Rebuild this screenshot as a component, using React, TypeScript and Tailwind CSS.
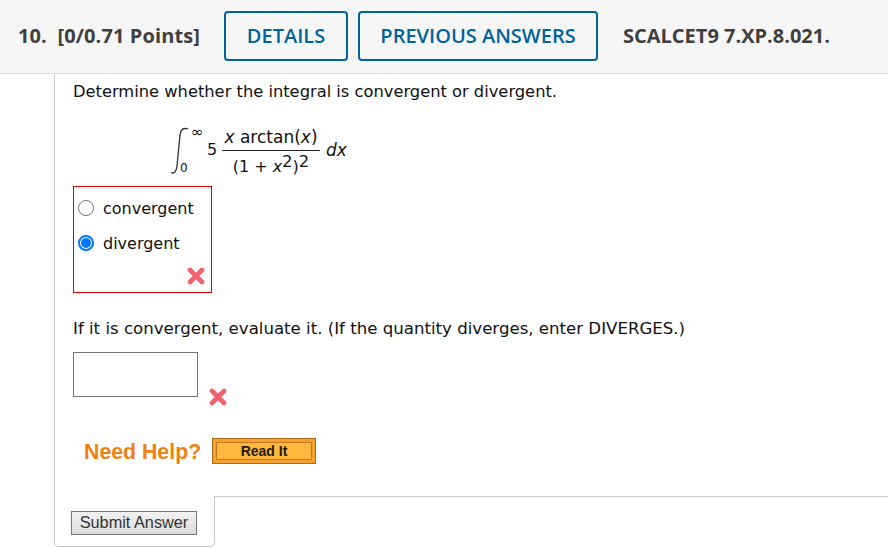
const bodyFont = "font-['DejaVu_Sans',Verdana,sans-serif]";

function CrossMark({ className }: { className: string }) {
  return (
    <svg viewBox="0 0 18 18" className={className}>
      <path d="M3 3 L15 15 M15 3 L3 15" stroke="#f4606c" strokeWidth="4.6" strokeLinecap="round" fill="none" />
    </svg>
  );
}

function Radio({ checked }: { checked?: boolean }) {
  return checked ? (
    <span className="flex h-[16px] w-[16px] items-center justify-center rounded-full border-2 border-[#0075ff] bg-white">
      <span className="h-[10px] w-[10px] rounded-full bg-[#0075ff]" />
    </span>
  ) : (
    <span className="h-[16px] w-[16px] rounded-full border-[1.5px] border-[#767676] bg-white" />
  );
}

function Integral() {
  return (
    <div className="ml-[94px] mt-[19px] flex h-[60px] items-start text-[17px] text-[#111]">
      <div className="relative h-[60px] w-[55px]">
        <svg viewBox="0 0 20 47" className="absolute left-[3px] top-[4px] h-[47px] w-[20px]">
          <path d="M1 45.5 C4 47 6.4 45 7 39 L10 8 C10.6 2.5 13 0.5 18 2" stroke="#333" strokeWidth="1.3" fill="none" />
        </svg>
        <span className="absolute left-[24px] top-[1px] text-[15px] leading-[16px]">∞</span>
        <span className="absolute left-[13px] top-[38px] text-[12px] leading-[14px]">0</span>
        <span className="absolute left-[40px] top-[17px] text-[16px] leading-[20px]">5</span>
      </div>
      <div className="flex w-[98px] flex-col items-center">
        <div className="h-[27px] whitespace-nowrap leading-[28px]">
          <i>x</i> arctan(<i>x</i>)
        </div>
        <div className="h-px w-full bg-[#222]" />
        <div className="whitespace-nowrap text-[16px] leading-[32px]">
          (1 + <i>x</i>
          <sup className="top-[-0.32em] text-[16.5px] leading-none">2</sup>)<sup className="top-[-0.32em] text-[16.5px] leading-none">2</sup>
        </div>
      </div>
      <div className="ml-[6px] mt-[17px] text-[17px] italic leading-[20px]">dx</div>
    </div>
  );
}

export default function App() {
  return (
    <div className={`h-[548px] w-[888px] overflow-hidden bg-white ${bodyFont}`}>
      <header className="flex h-[74px] items-center border-b border-[#dcdcdc] bg-[#f6f6f6] pb-[1px] pl-[18px] font-['Open_Sans',sans-serif] text-[20px] font-bold text-[#3f3f3f]">
        <span className="w-[206px] whitespace-pre tracking-[0.1px]">10.  [0/0.71 Points]</span>
        <button className="h-[50px] w-[124px] rounded-[4px] border-2 border-[#00639c] text-center font-semibold text-[#00639c]">
          DETAILS
        </button>
        <button className="ml-[10px] h-[50px] w-[240px] rounded-[4px] border-2 border-[#00639c] text-center font-semibold text-[#00639c]">
          PREVIOUS ANSWERS
        </button>
        <span className="ml-[25px]">SCALCET9 7.XP.8.021.</span>
      </header>

      <div className="pl-[54px]">
        <main className="h-[422px] border-l border-[#c8c8c8] pl-[18px] pt-[6px] text-[16px] text-[#111]">
          <p className="whitespace-nowrap text-[16.3px] leading-[24px]">Determine whether the integral is convergent or divergent.</p>
          <Integral />

          <div className="mt-[3px] h-[107px] w-[139px] border border-[#dd0000] pl-[4px] pt-[3px]">
            <label className="flex h-[35px] items-center gap-[9px]">
              <Radio />
              <span className="pt-[2px]">convergent</span>
            </label>
            <label className="flex h-[35px] items-center gap-[9px]">
              <Radio checked />
              <span className="pt-[2px]">divergent</span>
            </label>
            <div className="flex justify-end pr-[6px] pt-[7px]">
              <CrossMark className="h-[18px] w-[18px]" />
            </div>
          </div>

          <p className="mt-[24px] whitespace-nowrap text-[16.6px] leading-[24px]">If it is convergent, evaluate it. (If the quantity diverges, enter DIVERGES.)</p>

          <div className="mt-[11px] flex items-end">
            <div className="h-[45px] w-[125px] border border-[#767676] bg-white" />
            <CrossMark className="mb-[-9px] ml-[11px] h-[18px] w-[18px]" />
          </div>

          <div className="ml-[11px] mt-[41px] flex h-[26px] items-start font-['Liberation_Sans',Arial,sans-serif]">
            <span className="h-[26px] w-[128px] text-[21.3px] font-bold leading-[28px] text-[#f08010]">Need Help?</span>
            <div className="flex h-[26px] w-[104px] items-center justify-center border border-[#b06a14] bg-[#f5a030] p-[3px]">
              <div className="flex h-full w-full items-center justify-center border border-[#c07a20] bg-[#ffb73d] text-[14px] font-bold text-[#1c1c1c]">
                Read It
              </div>
            </div>
          </div>
        </main>

        <div className="flex h-[51px]">
          <div className="h-[51px] w-[161px] rounded-b-[5px] border-x border-b border-[#c8c8c8] pl-[16px] pt-[15px]">
            <button className="h-[24px] w-[126px] border border-[#767676] bg-gradient-to-b from-[#f2f2f2] to-[#dcdcdc] pb-[2px] font-['Liberation_Sans',Arial,sans-serif] text-[16.3px] leading-[20px] text-[#333]">
              Submit Answer
            </button>
          </div>
          <div className="flex-1 border-t border-[#c8c8c8]" />
        </div>
      </div>
    </div>
  );
}
